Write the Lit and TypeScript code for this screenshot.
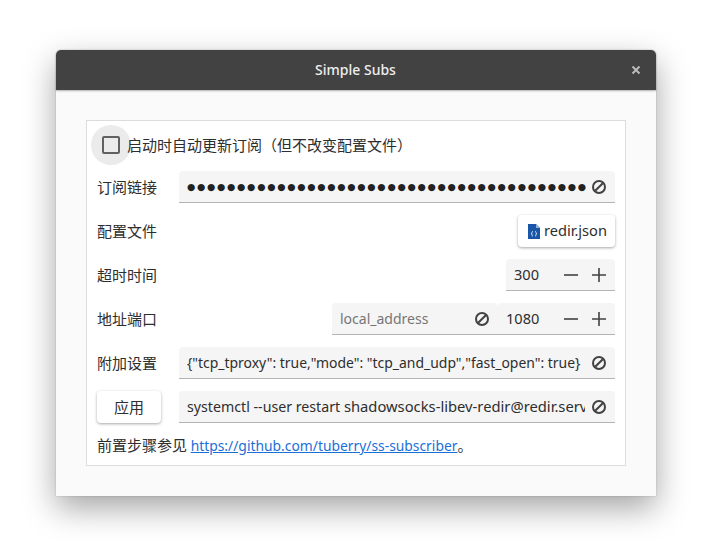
import { LitElement, html, css, svg } from "lit";
import { customElement } from "lit/decorators.js";

const clear = svg`<svg class="ic clr" viewBox="0 0 16 16" width="16" height="16"><circle cx="8" cy="8" r="6" fill="none" stroke="currentColor" stroke-width="2"/><path d="M4.200 11.800 11.800 4.200" stroke="currentColor" stroke-width="2" fill="none"/></svg>`;
const minus = svg`<svg class="ic" viewBox="0 0 16 16" width="16" height="16"><path d="M1 8h14" stroke="currentColor" stroke-width="1.600" fill="none"/></svg>`;
const plus = svg`<svg class="ic" viewBox="0 0 16 16" width="16" height="16"><path d="M1 8h14M8 1v14" stroke="currentColor" stroke-width="1.600" fill="none"/></svg>`;

@customElement("app-root")
export class AppRoot extends LitElement {
  static styles = css`
    :host { display: block; width: 712px; height: 558px; background: #fff; overflow: hidden;
      font-family: "Noto Sans", "Noto Sans CJK SC", sans-serif; font-size: 14px; color: #2e2e2e; line-height: 20px; }
    * { box-sizing: border-box; }
    .page { padding: 50px 56px 0; }
    .win { width: 600px; height: 446px; background: #fafafa; border-radius: 5px 5px 0 0;
      box-shadow: 0 12px 32px rgba(0,0,0,.36), 0 0 2px rgba(0,0,0,.2); padding-bottom: 30px; display: flex; flex-direction: column; }
    .head { height: 40px; flex: none; background: #424242; border-radius: 5px 5px 0 0; color: #eee; font-weight: 500;
      display: grid; grid-template-columns: 1fr auto 1fr; align-items: center; box-shadow: 0 1px 2px rgba(0,0,0,.3); padding-bottom: 1px; }
    .head .t { grid-column: 2; font-size: 14px; margin-left: -1px; }
    .head .x { grid-column: 3; justify-self: end; margin-right: 15px; color: #bbb; display: flex; }
    .card { margin: 30px 30px 0; height: 346px; background: #fff; border: 1px solid #dcdcdc; padding: 4px 10px 0; display: flex; flex-direction: column; }
    .chk { display: flex; align-items: center; height: 40px; margin-left: -6px; margin-bottom: 6px; }
    .chk .cjk { margin-left: -4px; }
    .halo { width: 40px; height: 40px; border-radius: 50%; background: #ebebeb; display: flex; align-items: center; justify-content: center; flex: none; }
    .box { width: 18px; height: 18px; border: 2px solid #616161; border-radius: 2px; }
    .rows { display: flex; flex-direction: column; gap: 12px; }
    .row { display: flex; align-items: center; height: 32px; }
    .cjk { font-size: 15px; }
    .lab { width: 82px; flex: none; }
    .fill { flex: 1; min-width: 0; }
    .entry { height: 32px; background: #f5f5f5; border-bottom: 1px solid #b4b4b4; border-radius: 4px 4px 0 0;
      display: flex; align-items: center; padding: 0 8px; }
    .entry .v { flex: 1; min-width: 0; white-space: nowrap; overflow: hidden; }
    .entry .v.dots { overflow: visible; flex: 1; font-family: "DejaVu Sans", sans-serif; font-size: 9.500px; letter-spacing: 1.730px; color: #222; }
    .entry .ic { flex: none; color: #424242; }
    .entry .clr { margin-left: 6px; }
    .spacer { flex: 1; }
    .btn { height: 32px; background: #fff; border-radius: 4px; box-shadow: 0 1px 3px rgba(0,0,0,.35);
      display: flex; align-items: center; justify-content: center; }
    .file { width: 97px; justify-content: flex-start; padding-left: 10px; gap: 4px; font-size: 14.600px; }
    .file span { padding-bottom: 2px; }
    .apply { width: 64px; margin-right: 18px; flex: none; }
    .spin { width: 109px; flex: none; }
    .spin.wide { width: 117px; }
    .spin .ic + .ic { margin-left: 12px; }
    .spin .v { flex: 1; font-size: 14.600px; padding-bottom: 2px; }
    .addr { width: 166px; flex: none; }
    .ph { color: #757575; }
    .json { font-size: 13.950px; }
    .cmd { font-size: 14.200px; }
    .cmd2 { font-size: 14.750px; }
    .foot { margin-top: 12px; line-height: 20px; }
    a { color: #1a6fd8; font-size: 13.850px; }
  `;
  render() {
    return html`<div class="page"><div class="win">
      <div class="head"><span class="t">Simple Subs</span>
        <span class="x"><svg viewBox="0 0 10 10" width="10" height="10"><path d="M1.500 1.500l7 7M8.500 1.500l-7 7" stroke="currentColor" stroke-width="2" fill="none"/></svg></span></div>
      <div class="card">
        <div class="chk"><span class="halo"><span class="box"></span></span><span class="cjk">启动时自动更新订阅（但不改变配置文件）</span></div>
        <div class="rows">
          <div class="row"><span class="lab cjk">订阅链接</span><div class="entry fill"><span class="v dots">${"●".repeat(40)}</span>${clear}</div></div>
          <div class="row"><span class="lab cjk">配置文件</span><span class="spacer"></span>
            <div class="btn file"><svg viewBox="0 0 12 15" width="12" height="15"><path d="M0 0h8l4 4v11H0z" fill="#1a56a8"/><path d="M8 0l4 4H8z" fill="#8fb2e0"/><path d="M5 7.500c-1 0-1 .5-1 1.200s-.2 1-.8 1c.6 0 .8.3.8 1s0 1.300 1 1.300M7 7.500c1 0 1 .5 1 1.200s.2 1 .8 1c-.6 0-.8.3-.8 1s0 1.300-1 1.300" stroke="#fff" stroke-width=".8" fill="none"/></svg><span>redir.json</span></div></div>
          <div class="row"><span class="lab cjk">超时时间</span><span class="spacer"></span><div class="entry spin"><span class="v">300</span>${minus}${plus}</div></div>
          <div class="row"><span class="lab cjk">地址端口</span><span class="spacer"></span><div class="entry addr"><span class="v ph">local_address</span>${clear}</div><div class="entry spin wide"><span class="v">1080</span>${minus}${plus}</div></div>
          <div class="row"><span class="lab cjk">附加设置</span><div class="entry fill"><span class="v json">{"tcp_tproxy": true,"mode": "tcp_and_udp","fast_open": true}</span>${clear}</div></div>
          <div class="row"><div class="btn apply cjk">应用</div><div class="entry fill"><span class="v cmd">systemctl --user restart <span class="cmd2">shadowsocks-libev-redir@redir.service</span></span>${clear}</div></div>
        </div>
        <div class="foot"><span class="cjk">前置步骤参见</span> <a href="#">https://github.com/tuberry/ss-subscriber</a><span class="cjk">。</span></div>
      </div>
    </div></div>`;
  }
}
